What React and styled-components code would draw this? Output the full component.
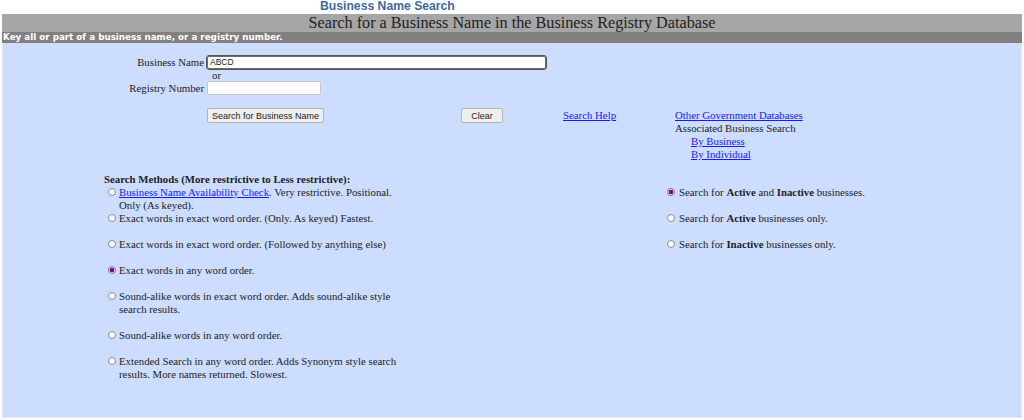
import React from 'react';
import styled, { createGlobalStyle } from 'styled-components';

const GlobalStyle = createGlobalStyle`
  body {
    margin: 0;
    background: #ffffff;
    font-family: "Liberation Serif", "Times New Roman", serif;
    color: #222222;
  }
`;

const Page = styled.div`
  width: 1024px;
  height: 420px;
  padding: 0 2px;
  box-sizing: border-box;
  overflow: hidden;
`;

const SiteTitle = styled.div`
  height: 14px;
  padding-left: 318px;
  font-family: "Liberation Sans", Arial, sans-serif;
  font-weight: bold;
  font-size: 12.2px;
  line-height: 12px;
  color: #3d6b9e;
`;

const Banner = styled.div`
  height: 18px;
  background: #a6a6a6;
  text-align: center;
  font-size: 16.2px;
  line-height: 18px;
  color: #222222;
`;

const SubBanner = styled.div`
  height: 11px;
  background: #808080;
  padding-left: 1px;
  font-family: "DejaVu Sans", Verdana, sans-serif;
  font-weight: bold;
  font-size: 8.75px;
  line-height: 10px;
  color: #ffffff;
  white-space: nowrap;
`;

const Panel = styled.div`
  height: 375px;
  box-sizing: border-box;
  background: #ccddff;
  border: 1px solid #dfe8ff;
  border-top: none;
  padding-top: 12px;
  font-size: 10.8px;
  line-height: 13px;
`;

const FieldRow = styled.div`
  display: flex;
  align-items: center;
  gap: 3px;
  height: ${p => p.$h || 14}px;
`;

const Label = styled.label`
  width: 201px;
  text-align: right;
  white-space: nowrap;
`;

const TextBox = styled.input`
  width: ${p => p.$w}px;
  height: ${p => p.$hgt}px;
  box-sizing: border-box;
  margin: 0;
  padding: 0 2px;
  font-family: "Liberation Sans", Arial, sans-serif;
  font-size: 8.5px;
  color: #222;
  background: #ffffff;
  border: 1px solid ${p => (p.$focus ? '#6b6b6b' : '#c8c8c8')};
  border-radius: 2px;
  outline: ${p => (p.$focus ? '1px solid #555' : 'none')};
`;

const OrLine = styled.div`
  height: 12px;
  line-height: 13px;
  padding-left: 209px;
`;

const ActionRow = styled.div`
  display: grid;
  grid-template-columns: 254px 102px 112px auto;
  margin-top: 13px;
  padding-left: 204px;
  align-items: start;
`;

const Button = styled.button`
  width: ${p => p.$w}px;
  height: 15px;
  margin: 0;
  padding: 0;
  font-family: "Liberation Sans", Arial, sans-serif;
  font-size: 9px;
  color: #222;
  background: #efefef;
  border: 1px solid #b4b4b4;
  border-radius: 2px;
`;

const LinkCell = styled.div`
  padding-top: 1px;
  white-space: nowrap;
`;

const Link = styled.a`
  color: #1a1aee;
  text-decoration: underline;
  cursor: pointer;
`;

const Indented = styled.div`
  padding-left: 16px;
`;

const Methods = styled.div`
  display: grid;
  grid-template-columns: 559px auto;
  margin-top: 12px;
  padding-left: 101px;
`;

const Heading = styled.div`
  font-weight: bold;
  white-space: nowrap;
`;

const OptionList = styled.div`
  display: flex;
  flex-direction: column;
  padding-top: ${p => p.$top || 0}px;
`;

const Option = styled.div`
  display: flex;
  align-items: flex-start;
  gap: ${p => p.$gap || 3}px;
  padding-left: 4px;
  margin-bottom: ${p => (p.$tight ? 0 : 13)}px;
  max-width: ${p => p.$max || 300}px;
`;

const Radio = styled.input.attrs({ type: 'radio' })`
  appearance: none;
  flex-shrink: 0;
  width: 8px;
  height: 8px;
  margin: 2px 0 0 0;
  border-radius: 50%;
  background: #ffffff;
  border: 1px solid #8a8a8a;
  box-sizing: border-box;
  &:checked {
    border-color: #a45cb3;
    background: radial-gradient(circle, #6b0f7e 0 2px, #e9d4ee 2.5px);
  }
`;

const OptionText = styled.span``;

const leftOptions = [
  { id: 'avail', tight: true, text: <><Link>Business Name Availability Check</Link>. Very restrictive. Positional. Only (As keyed).</> },
  { id: 'exact', text: 'Exact words in exact word order. (Only. As keyed) Fastest.' },
  { id: 'follow', text: 'Exact words in exact word order. (Followed by anything else)' },
  { id: 'any', checked: true, text: 'Exact words in any word order.' },
  { id: 'soundexact', text: 'Sound-alike words in exact word order. Adds sound-alike style search results.' },
  { id: 'soundany', text: 'Sound-alike words in any word order.' },
  { id: 'extended', text: 'Extended Search in any word order. Adds Synonym style search results. More names returned. Slowest.' },
];

const rightOptions = [
  { id: 'both', checked: true, text: <>Search for <b>Active</b> and <b>Inactive</b> businesses.</> },
  { id: 'active', text: <>Search for <b>Active</b> businesses only.</> },
  { id: 'inactive', text: <>Search for <b>Inactive</b> businesses only.</> },
];

export default function App() {
  return (
    <Page>
      <GlobalStyle />
      <SiteTitle>Business Name Search</SiteTitle>
      <Banner>Search for a Business Name in the Business Registry Database</Banner>
      <SubBanner>Key all or part of a business name, or a registry number.</SubBanner>
      <Panel>
        <FieldRow $h={14}>
          <Label>Business Name</Label>
          <TextBox $w={339} $hgt={13} $focus defaultValue="ABCD" />
        </FieldRow>
        <OrLine>or</OrLine>
        <FieldRow $h={14}>
          <Label>Registry Number</Label>
          <TextBox $w={114} $hgt={14} />
        </FieldRow>
        <ActionRow>
          <div><Button $w={117}>Search for Business Name</Button></div>
          <div><Button $w={42}>Clear</Button></div>
          <LinkCell><Link>Search Help</Link></LinkCell>
          <LinkCell>
            <div><Link>Other Government Databases</Link></div>
            <div>Associated Business Search</div>
            <Indented><Link>By Business</Link></Indented>
            <Indented><Link>By Individual</Link></Indented>
          </LinkCell>
        </ActionRow>
        <Methods>
          <OptionList>
            <Heading>Search Methods (More restrictive to Less restrictive):</Heading>
            {leftOptions.map(o => (
              <Option key={o.id} $tight={o.tight} $max={302}>
                <Radio name="method" defaultChecked={o.checked} />
                <OptionText>{o.text}</OptionText>
              </Option>
            ))}
          </OptionList>
          <OptionList $top={13}>
            {rightOptions.map(o => (
              <Option key={o.id} $gap={4} $max={400}>
                <Radio name="status" defaultChecked={o.checked} />
                <OptionText>{o.text}</OptionText>
              </Option>
            ))}
          </OptionList>
        </Methods>
      </Panel>
    </Page>
  );
}
